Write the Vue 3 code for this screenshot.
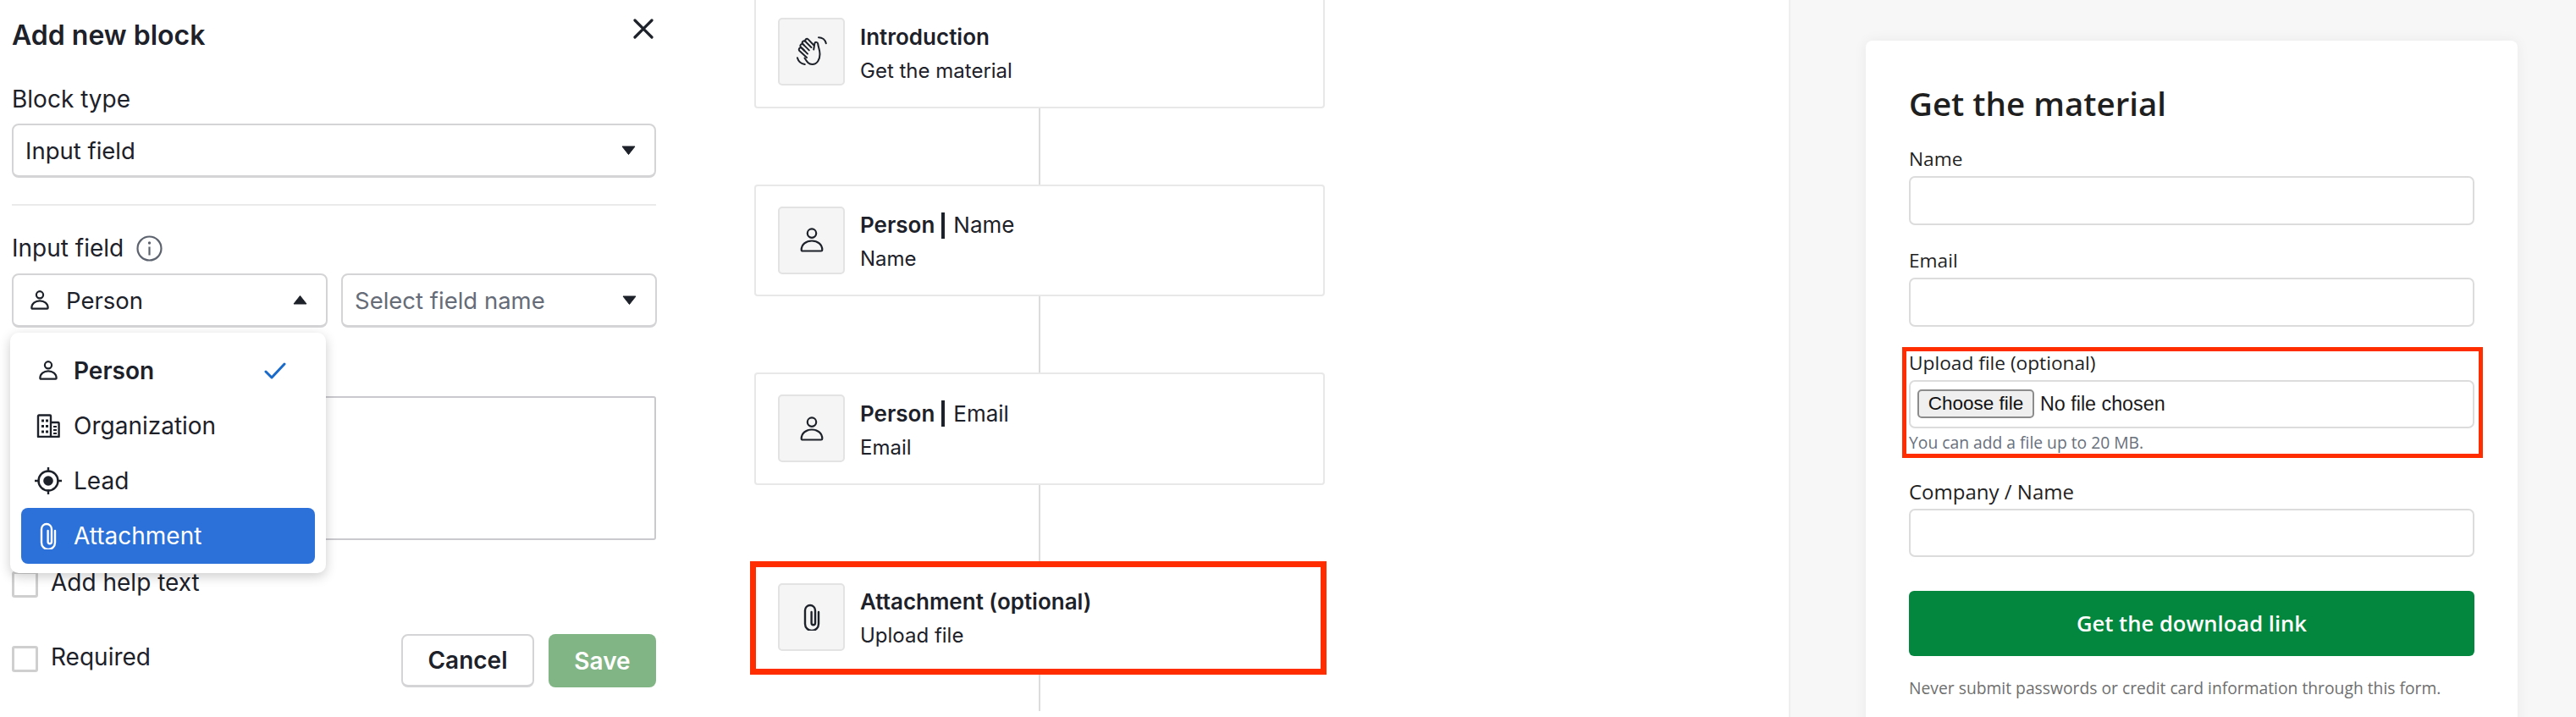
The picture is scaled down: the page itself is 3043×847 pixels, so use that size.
<script setup>
const blocks = [
  { icon: 'wave', title: 'Introduction', sub: 'Get the material' },
  { icon: 'person', title: 'Person', extra: 'Name', sub: 'Name' },
  { icon: 'person', title: 'Person', extra: 'Email', sub: 'Email' },
  { icon: 'clip', title: 'Attachment (optional)', sub: 'Upload file', marked: true },
]
</script>

<template>
  <div class="page">
    <aside class="editor">
      <div class="head">
        <h2 class="title">Add new block</h2>
        <svg class="close" width="24" height="24" viewBox="0 0 24 24"><path d="M2 2l20 20M22 2L2 22" stroke="#1d2129" stroke-width="3.2" stroke-linecap="round"/></svg>
      </div>

      <div class="label first">Block type</div>
      <div class="select">
        <span>Input field</span>
        <svg class="caret" width="17" height="11" viewBox="0 0 17 11"><path d="M1 1h15l-7.5 9.5z" fill="#1d2129" stroke="#1d2129" stroke-linejoin="round"/></svg>
      </div>

      <div class="rule"></div>

      <div class="label second">
        Input field
        <svg class="info" width="31" height="31" viewBox="0 0 31 31"><circle cx="15.5" cy="15.5" r="14" fill="none" stroke="#5d636e" stroke-width="2.2"/><circle cx="15.5" cy="9" r="1.7" fill="#5d636e"/><path d="M15.5 13.5v10" stroke="#5d636e" stroke-width="2.2"/></svg>
      </div>
      <div class="selrow">
        <div class="select half">
          <span class="with-icon">
            <svg width="22" height="25" viewBox="0 0 28 29"><circle cx="14" cy="6.600" r="5.200" fill="none" stroke="#1d2129" stroke-width="2.800"/><path d="M3 27.500h22a1.300 1.300 0 0 0 1.300-1.300c0-6.500-5.500-10.700-12.300-10.700S1.700 19.700 1.700 26.200A1.300 1.300 0 0 0 3 27.500z" fill="none" stroke="#1d2129" stroke-width="2.800" stroke-linejoin="round"/></svg>
            Person
          </span>
          <svg class="caret" width="17" height="11" viewBox="0 0 17 11"><path d="M1 10h15L8.5.5z" fill="#1d2129" stroke="#1d2129" stroke-linejoin="round"/></svg>
        </div>
        <div class="select half">
          <span class="muted">Select field name</span>
          <svg class="caret" width="17" height="11" viewBox="0 0 17 11"><path d="M1 1h15l-7.5 9.5z" fill="#1d2129" stroke="#1d2129" stroke-linejoin="round"/></svg>
        </div>

        <div class="menu">
          <div class="item strong">
            <span class="item-ico"><svg width="22" height="25" viewBox="0 0 28 29"><circle cx="14" cy="6.600" r="5.200" fill="none" stroke="#1d2129" stroke-width="2.800"/><path d="M3 27.500h22a1.300 1.300 0 0 0 1.300-1.300c0-6.500-5.500-10.700-12.300-10.700S1.700 19.700 1.700 26.200A1.300 1.300 0 0 0 3 27.500z" fill="none" stroke="#1d2129" stroke-width="2.800" stroke-linejoin="round"/></svg></span>
            <span class="item-text">Person</span>
            <svg class="check" width="26" height="20" viewBox="0 0 26 20"><path d="M2 11l7 7L24 2" fill="none" stroke="#1a6ac9" stroke-width="3" stroke-linecap="round" stroke-linejoin="round"/></svg>
          </div>
          <div class="item">
            <span class="item-ico"><svg width="28" height="28" viewBox="0 0 28 28"><path d="M2 27V2.5a1 1 0 0 1 1-1h13a1 1 0 0 1 1 1V27zM17 10h8.600a1 1 0 0 1 1 1v16H17zM1 27h26" fill="none" stroke="#1d2129" stroke-width="2.4" stroke-linejoin="round"/><path d="M6 6.500h3v3H6zM11 6.500h3v3h-3zM6 13h3v3H6zM11 13h3v3h-3zM6 19.500h3v3H6zM11 19.500h3v3h-3z" fill="#1d2129"/><path d="M20 15h4M20 19h4M20 23h4" stroke="#1d2129" stroke-width="2"/></svg></span>
            <span class="item-text">Organization</span>
          </div>
          <div class="item">
            <span class="item-ico"><svg width="32" height="32" viewBox="0 0 32 32"><circle cx="16" cy="16" r="11.500" fill="none" stroke="#1d2129" stroke-width="2.400"/><circle cx="16" cy="16" r="5.800" fill="#1d2129"/><path d="M16 .5v4M16 27.500v4M.5 16h4M27.500 16h4" stroke="#1d2129" stroke-width="2.400" stroke-linecap="round"/></svg></span>
            <span class="item-text">Lead</span>
          </div>
          <div class="item active">
            <span class="item-ico"><svg width="20" height="32" viewBox="0 0 20 32"><path d="M18 10v14a8 8 0 0 1-16 0V8a6 6 0 0 1 12 0v15a2.200 2.200 0 0 1-4.400 0V10" fill="none" stroke="#fff" stroke-width="2.400" stroke-linecap="round"/></svg></span>
            <span class="item-text">Attachment</span>
          </div>
        </div>
      </div>

      <div class="textarea"></div>

      <label class="check-row help"><span class="box"></span><span class="check-text">Add help text</span></label>

      <div class="foot">
        <label class="check-row req"><span class="box"></span><span class="check-text">Required</span></label>
        <div class="actions">
          <button class="btn cancel">Cancel</button>
          <button class="btn save">Save</button>
        </div>
      </div>
    </aside>

    <section class="flow">
      <template v-for="(b, i) in blocks" :key="i">
        <div class="card">
          <div class="ico-box">
            <svg v-if="b.icon === 'wave'" width="36" height="36" viewBox="0 0 36 36" fill="none" stroke="#1d2129" stroke-width="2" stroke-linecap="round" stroke-linejoin="round">
              <path d="M12 25L3.400 17a2.100 2.100 0 0 1 3-3l6.600 6.600"/>
              <path d="M9.200 16.800L5 12.600a2.100 2.100 0 0 1 3-3l6.800 6.800"/>
              <path d="M8.800 10.400L7.400 9a2.100 2.100 0 0 1 3-3l7 7"/>
              <path d="M10.400 6a2.100 2.100 0 0 1 3.200-2.600l6.600 6.800"/>
              <path d="M20.200 15.500l1.100-7.200a2 2 0 0 1 3.900.3c.2 3.600 2.300 7 2.300 12.400 0 6-3 12-9 12-4.500 0-6.500-3.500-9-7.500"/>
              <path d="M26 1.200a9 9 0 0 1 8.800 7"/>
              <path d="M.9 25.200a11 11 0 0 0 8.800 7.800"/>
            </svg>
            <svg v-else-if="b.icon === 'person'" width="28" height="29" viewBox="0 0 28 29"><circle cx="14" cy="6.600" r="5.200" fill="none" stroke="#1d2129" stroke-width="2.200"/><path d="M3 27.500h22a1.300 1.300 0 0 0 1.300-1.300c0-6.500-5.500-10.700-12.300-10.700S1.700 19.700 1.700 26.200A1.300 1.300 0 0 0 3 27.500z" fill="none" stroke="#1d2129" stroke-width="2.200" stroke-linejoin="round"/></svg>
            <svg v-else width="20" height="32" viewBox="0 0 20 32"><path d="M18 10v14a8 8 0 0 1-16 0V8a6 6 0 0 1 12 0v15a2.200 2.200 0 0 1-4.400 0V10" fill="none" stroke="#1d2129" stroke-width="2.400" stroke-linecap="round"/></svg>
          </div>
          <div class="card-text">
            <div class="card-title"><b>{{ b.title }}</b><template v-if="b.extra"><span class="pipe"></span><span>{{ b.extra }}</span></template></div>
            <div class="card-sub">{{ b.sub }}</div>
          </div>
          <div v-if="b.marked" class="mark"></div>
        </div>
        <div class="link" :class="{ last: i === blocks.length - 1 }"></div>
      </template>
    </section>

    <section class="preview">
      <div class="form">
        <h1 class="form-title">Get the material</h1>
        <div class="field">
          <div class="f-label">Name</div>
          <div class="f-input"></div>
        </div>
        <div class="field">
          <div class="f-label">Email</div>
          <div class="f-input"></div>
        </div>
        <div class="field upload">
          <div class="f-label tight">Upload file (optional)</div>
          <div class="f-input file">
            <button class="choose">Choose file</button>
            <span class="nofile">No file chosen</span>
          </div>
          <div class="f-help">You can add a file up to 20 MB.</div>
          <div class="mark thin"></div>
        </div>
        <div class="field company">
          <div class="f-label tight big">Company / Name</div>
          <div class="f-input short"></div>
        </div>
        <button class="submit">Get the download link</button>
        <p class="note">Never submit passwords or credit card information through this form.</p>
      </div>
    </section>
  </div>
</template>

<style>
html, body { margin: 0; background: #fff; }
</style>

<style scoped>
* { box-sizing: border-box; }
.page {
  display: flex;
  width: 3043px;
  height: 847px;
  overflow: hidden;
  background: #fff;
  color: #1d2129;
  font-family: Inter, "Liberation Sans", sans-serif;
  font-size: 28px;
}

/* left editor */
.editor { width: 789px; flex: none; padding: 22px 14px 0; }
.head { display: flex; justify-content: space-between; align-items: flex-start; height: 40px; }
.title { margin: 0; font-size: 32px; line-height: 40px; font-weight: 600; }
.close { margin: 0 3px 0 0; }
.label { line-height: 36px; display: flex; align-items: center; }
.label.first { margin: 37px 0 11px; }
.label.second { margin: 32px 0 12px; }
.info { margin-left: 15px; }
.select {
  height: 64px;
  display: flex;
  align-items: center;
  justify-content: space-between;
  padding: 0 22px 0 14px;
  border: 2px solid #d4d4d6;
  border-bottom-width: 3px;
  border-radius: 8px;
  background: #fff;
  font-size: 27.500px;
}
.rule { height: 2px; margin-top: 31px; background: #eaeaea; }
.selrow { position: relative; display: flex; gap: 16px; }
.half { width: 373px; flex: none; }
.half:first-child { padding-left: 20px; padding-right: 22px; }
.with-icon { display: flex; align-items: center; gap: 20px; }
.muted { color: #666c77; }

.menu {
  position: absolute;
  top: 70px;
  left: -2px;
  width: 373px;
  height: 284px;
  padding: 12px 13px 0;
  background: #fff;
  border-radius: 10px;
  box-shadow: 0 4px 14px rgba(0, 0, 0, .2);
}
.item { height: 65px; display: flex; align-items: center; padding: 0 12px 0 0; border-radius: 8px; }
.item-ico { width: 62px; flex: none; display: flex; justify-content: center; padding-left: 2px; }
.item-text { flex: 1; }
.strong .item-text { font-weight: 600; }
.check { margin-right: 22px; }
.active { height: 66px; background: #2b71d9; color: #fff; }

.textarea {
  height: 170px;
  margin-top: 81px;
  border: 2px solid #c9c9ce;
  border-radius: 3px;
}
.check-row { display: flex; align-items: center; gap: 15px; }
.help { margin-top: 37px; height: 31px; }
.check-text { margin-top: -5px; }
.req { margin-bottom: 4px; }
.box { width: 31px; height: 31px; border: 3px solid #cfcfcf; border-radius: 3px; background: #fff; flex: none; }
.foot { display: flex; justify-content: space-between; align-items: center; margin-top: 43px; height: 63px; }
.actions { display: flex; gap: 17px; }
.btn {
  height: 63px;
  border-radius: 8px;
  font: 600 28px Inter, "Liberation Sans", sans-serif;
}
.cancel { width: 157px; background: #fff; color: #1d2129; border: 2px solid #d4d4d6; border-bottom-width: 3px; }
.save { width: 127px; background: #82b585; color: #fff; border: 0; }

/* middle flow */
.flow { width: 674px; flex: none; margin: -5px 0 0 102px; display: flex; flex-direction: column; align-items: center; }
.card {
  position: relative;
  width: 100%;
  height: 132.5px;
  flex: none;
  display: flex;
  align-items: center;
  gap: 18px;
  padding: 0 26px;
  border: 2px solid #e8e8e8;
  border-radius: 4px;
}
.ico-box {
  width: 79px;
  height: 80px;
  flex: none;
  display: flex;
  align-items: center;
  justify-content: center;
  background: #f5f5f5;
  border: 2px solid #e3e3e3;
  border-radius: 5px;
}
.card-text { padding-top: 3px; }
.card-title { font-size: 26px; line-height: 38px; height: 38px; display: flex; align-items: center; }
.card-title b { font-weight: 600; }
.pipe { display: inline-block; width: 4px; height: 31px; background: #1d2129; margin: 0 10px 0 8px; }
.card-sub { font-size: 24px; line-height: 34px; margin-top: 4px; }
.link { width: 2px; height: 90px; flex: none; background: #dcdcdc; }
.link.last { height: 45px; }
.mark {
  position: absolute;
  inset: -2px -4px -4px -7px;
  border: 7px solid #ff2d00;
  pointer-events: none;
}

/* right preview */
.preview { width: 930px; flex: none; margin-left: auto; padding: 48px 0 0 89px; background: #f7f7f7; border-left: 2px solid #eeeeee; }
.form {
  width: 770px;
  height: 900px;
  padding: 46px 51px 0;
  background: #fff;
  border-radius: 8px;
  box-shadow: 0 0 16px rgba(0, 0, 0, .06);
  font-family: "Open Sans", "Liberation Sans", sans-serif;
  color: #1f1f1f;
}
.form-title { margin: 0 0 22px; font-size: 38.500px; line-height: 56px; font-weight: 600; }
.field { position: relative; margin-bottom: 26.500px; }
.f-label { font-size: 22.700px; line-height: 32px; margin-bottom: 3.500px; }
.f-label.tight { margin-top: -1px; margin-bottom: 4px; }
.f-label.big { font-size: 24px; }
.f-input { height: 58px; background: #fff; border: 2px solid #dcdcdc; border-radius: 7px; }
.f-input.short { height: 57px; }
.upload { margin-top: 28px; margin-bottom: 29px; }
.file { height: 57px; display: flex; align-items: center; padding: 0 0 0 8px; }
.choose {
  width: 138px;
  height: 34px;
  padding: 0;
  background: #efefef;
  border: 2px solid #8c8c8c;
  border-radius: 5px;
  color: #111;
  font: 22.500px "Liberation Sans", sans-serif;
}
.nofile { margin-left: 7px; font: 23.300px "Liberation Sans", sans-serif; color: #1a1a1a; }
.f-help { margin-top: 3px; font-size: 19.300px; line-height: 28px; color: #68707c; }
.upload .mark { inset: -3px -10px -4px -8px; }
.mark.thin { border-width: 5px; }
.company { margin-bottom: 0; }
.submit {
  display: block;
  width: 100%;
  height: 77px;
  margin-top: 40px;
  border: 0;
  border-radius: 6px;
  background: #03873e;
  color: #fff;
  font: 600 25.600px "Open Sans", "Liberation Sans", sans-serif;
}
.note { margin: 23px 0 0; font-size: 19.300px; line-height: 30px; color: #6f6f6f; }
</style>
